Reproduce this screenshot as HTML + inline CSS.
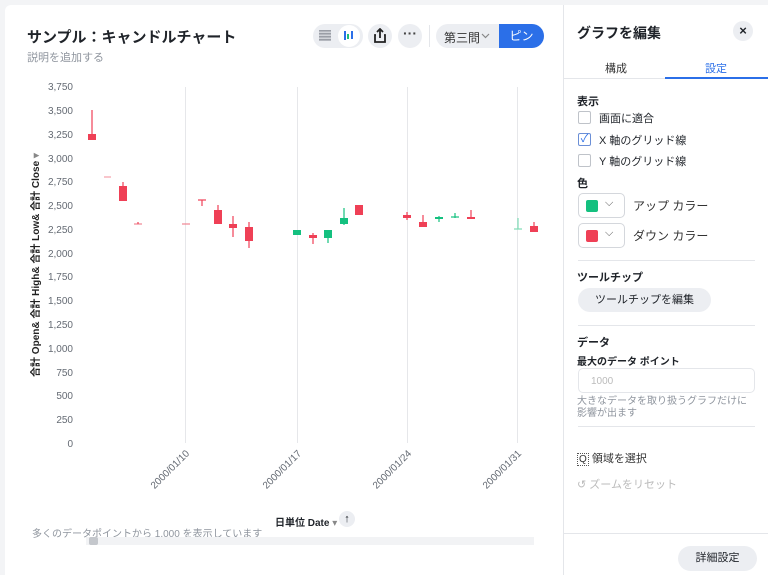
<!DOCTYPE html>
<html><head><meta charset="utf-8"><style>
*{margin:0;padding:0;box-sizing:border-box}
body{width:768px;height:575px;overflow:hidden;background:#f3f4f6;font-family:"Liberation Sans","Noto Sans CJK JP",sans-serif;color:#1f2329;position:relative}
.card{position:absolute;left:5px;top:5px;width:763px;height:570px;background:#fff;border-radius:6px 0 0 0}
.abs{position:absolute}
.title{left:27px;top:26px;font-size:15px;font-weight:bold}
.sub{left:27px;top:49px;font-size:11px;color:#8f959e}
.btn{background:#eceef2;border-radius:14px}
.panel{position:absolute;left:563px;top:5px;width:205px;height:570px;border-left:1px solid #e4e6ea;background:#fff}
.p{position:absolute;font-size:11px}
.cb{position:absolute;width:13px;height:13px;border:1px solid #bfc3c9;border-radius:2px;left:14px}
.sw{position:absolute;left:14px;width:47px;height:25px;border:1px solid #d4d7dc;border-radius:5px}
.sw i{position:absolute;left:7px;top:6px;width:12px;height:12px;border-radius:2px}
.sw b{position:absolute;left:26px;top:3px;font-size:11px;color:#555;font-weight:normal}
.hr{position:absolute;left:14px;width:177px;height:1px;background:#e4e6ea}
</style></head><body>
<div class="card"></div>
<div class="abs title">サンプル：キャンドルチャート</div>
<div class="abs sub">説明を追加する</div>
<div class="abs btn" style="left:313px;top:24px;width:50px;height:24px"></div>
<div class="abs" style="left:319px;top:30px;width:12px;height:11px;background:repeating-linear-gradient(#9a9ea6 0 1.5px,#d0d3d8 1.5px 3px)"></div>
<div class="abs" style="left:338px;top:25px;width:22px;height:22px;background:#fff;border-radius:50%"></div>
<div class="abs" style="left:344px;top:31px;width:2px;height:9px;background:#2b6fe8"></div>
<div class="abs" style="left:347px;top:34px;width:2px;height:5px;background:#1fbf7a"></div>
<div class="abs" style="left:351px;top:31px;width:2px;height:8px;background:#2b6fe8"></div>
<div class="abs btn" style="left:368px;top:24px;width:24px;height:24px;border-radius:50%"></div>
<svg class="abs" style="left:373px;top:28px" width="14" height="16" viewBox="0 0 14 16"><path d="M7 1v9M4 4l3-3 3 3M3 7H2v7h10V7h-1" fill="none" stroke="#222" stroke-width="1.8"/></svg>
<div class="abs btn" style="left:398px;top:24px;width:24px;height:24px;border-radius:50%;text-align:center;font-size:14px;line-height:18px;font-weight:bold;color:#444">···</div>
<div class="abs" style="left:429px;top:25px;width:1px;height:22px;background:#e4e6ea"></div>
<div class="abs" style="left:436px;top:24px;width:108px;height:24px;background:#eceef2;border-radius:12px"></div>
<div class="abs" style="left:444px;top:29px;font-size:12px;color:#333">第三問</div>
<svg class="abs" style="left:481px;top:33px" width="9" height="6"><path d="M1 1l3.5 3.5L8 1" fill="none" stroke="#888" stroke-width="1.2"/></svg>
<div class="abs" style="left:499px;top:24px;width:45px;height:24px;background:#2b6fe8;border-radius:0 12px 12px 0;color:#fff;font-size:12px;text-align:center;line-height:24px">ピン</div>
<svg class="abs" style="left:0;top:0" width="563" height="575">
<g stroke="#e6e7ea" stroke-width="1"><line x1="185.5" y1="87" x2="185.5" y2="443"/><line x1="297.5" y1="87" x2="297.5" y2="443"/><line x1="407.5" y1="87" x2="407.5" y2="443"/><line x1="517.5" y1="87" x2="517.5" y2="443"/></g>
<g font-size="10" fill="#646a73" text-anchor="end" font-family="Liberation Sans,sans-serif">
<text x="73" y="90">3,750</text><text x="73" y="114">3,500</text><text x="73" y="138">3,250</text><text x="73" y="162">3,000</text><text x="73" y="185">2,750</text><text x="73" y="209">2,500</text><text x="73" y="233">2,250</text><text x="73" y="257">2,000</text><text x="73" y="280">1,750</text><text x="73" y="304">1,500</text><text x="73" y="328">1,250</text><text x="73" y="352">1,000</text><text x="73" y="376">750</text><text x="73" y="399">500</text><text x="73" y="423">250</text><text x="73" y="447">0</text>
</g>
<text transform="translate(39,265) rotate(-90)" text-anchor="middle" font-size="10" font-weight="bold" fill="#222" font-family="Liberation Sans,Noto Sans CJK JP,sans-serif">合計 Open&amp; 合計 High&amp; 合計 Low&amp; 合計 Close <tspan fill="#888">▾</tspan></text>
<g font-size="10" fill="#646a73" text-anchor="end" font-family="Liberation Sans,sans-serif">
<text transform="translate(190,454) rotate(-45)">2000/01/10</text>
<text transform="translate(302,454) rotate(-45)">2000/01/17</text>
<text transform="translate(412,454) rotate(-45)">2000/01/24</text>
<text transform="translate(522,454) rotate(-45)">2000/01/31</text>
</g>
<g fill="#ef4056" stroke="#ef4056" stroke-width="1.2">
<line x1="92" y1="110" x2="92" y2="140"/><rect x="88" y="134" width="8" height="6" stroke="none"/>
<line x1="104" y1="177" x2="111" y2="177" stroke="#f5a0ab"/>
<line x1="123" y1="182" x2="123" y2="201"/><rect x="119" y="186" width="8" height="15" stroke="none"/>
<line x1="134" y1="224" x2="142" y2="224" stroke="#f08592"/><line x1="138" y1="222" x2="138" y2="224"/>
<line x1="182" y1="224" x2="190" y2="224" stroke="#f08592"/>
<line x1="198" y1="200" x2="206" y2="200"/><line x1="202" y1="200" x2="202" y2="206"/>
<line x1="218" y1="205" x2="218" y2="224"/><rect x="214" y="210" width="8" height="14" stroke="none"/>
<line x1="233" y1="216" x2="233" y2="237"/><rect x="229" y="224" width="8" height="4" stroke="none"/>
<line x1="249" y1="222" x2="249" y2="248"/><rect x="245" y="227" width="8" height="14" stroke="none"/>
<line x1="313" y1="233" x2="313" y2="244"/><rect x="309" y="235" width="8" height="3" stroke="none"/>
<rect x="355" y="205" width="8" height="10" stroke="none"/>
<line x1="407" y1="212" x2="407" y2="220"/><rect x="403" y="215" width="8" height="3" stroke="none"/>
<line x1="423" y1="215" x2="423" y2="227"/><rect x="419" y="222" width="8" height="5" stroke="none"/>
<line x1="471" y1="210" x2="471" y2="219"/><rect x="467" y="217" width="8" height="2" stroke="none"/>
<line x1="534" y1="222" x2="534" y2="232"/><rect x="530" y="226" width="8" height="6" stroke="none"/>
</g>
<g fill="#14c07f" stroke="#14c07f" stroke-width="1.2">
<rect x="293" y="230" width="8" height="5" stroke="none"/>
<line x1="328" y1="230" x2="328" y2="243"/><rect x="324" y="230" width="8" height="8" stroke="none"/>
<line x1="344" y1="208" x2="344" y2="225"/><rect x="340" y="218" width="8" height="6" stroke="none"/>
<line x1="439" y1="216" x2="439" y2="222"/><rect x="435" y="217" width="8" height="2" stroke="none"/>
<line x1="455" y1="213" x2="455" y2="218"/><line x1="451" y1="217" x2="459" y2="217"/>
<line x1="518" y1="218" x2="518" y2="229" stroke="#7fdcb6"/><line x1="514" y1="229" x2="522" y2="229" stroke="#7fdcb6"/>
</g>
</svg>
<div class="abs" style="left:275px;top:514px;font-size:10px;font-weight:bold">日単位 Date <span style="color:#888;font-weight:normal">▾</span></div>
<div class="abs" style="left:339px;top:511px;width:16px;height:16px;border-radius:50%;background:#eceef2;text-align:center;font-size:11px;line-height:16px;font-weight:bold">↑</div>
<div class="abs" style="left:32px;top:525px;font-size:10px;color:#8f959e">多くのデータポイントから 1,000 を表示しています</div>
<div class="abs" style="left:86px;top:537px;width:448px;height:8px;background:#f2f3f5"></div>
<div class="abs" style="left:89px;top:537px;width:9px;height:8px;background:#c4c7cc;border-radius:2px"></div>
<div class="panel">
<div class="p" style="left:13px;top:18px;font-size:14px;font-weight:bold">グラフを編集</div>
<div class="abs" style="left:169px;top:16px;width:20px;height:20px;border-radius:50%;background:#eceef2;text-align:center;line-height:20px;font-size:13px;font-weight:bold">×</div>
<div class="p" style="left:41px;top:55px;color:#333">構成</div>
<div class="p" style="left:141px;top:55px;color:#2b6fe8">設定</div>
<div class="abs" style="left:0;top:73px;width:205px;height:1px;background:#e4e6ea"></div>
<div class="abs" style="left:101px;top:72px;width:104px;height:2px;background:#2b6fe8"></div>
<div class="p" style="left:13px;top:88px;font-weight:bold">表示</div>
<div class="cb" style="top:106px"></div><div class="p" style="left:35px;top:105px">画面に適合</div>
<div class="cb" style="top:128px;border-color:#6b8fd6;color:#2b6fe8;font-size:11px;line-height:11px;text-align:center">✓</div><div class="p" style="left:35px;top:127px">X 軸のグリッド線</div>
<div class="cb" style="top:149px"></div><div class="p" style="left:35px;top:148px">Y 軸のグリッド線</div>
<div class="p" style="left:13px;top:170px;font-weight:bold">色</div>
<div class="sw" style="top:188px"><i style="background:#14c07f"></i><b>⌵</b></div><div class="p" style="left:69px;top:192px;font-size:12px;color:#333">アップ カラー</div>
<div class="sw" style="top:218px"><i style="background:#ef4056"></i><b>⌵</b></div><div class="p" style="left:69px;top:222px;font-size:12px;color:#333">ダウン カラー</div>
<div class="hr" style="top:255px"></div>
<div class="p" style="left:13px;top:264px;font-weight:bold">ツールチップ</div>
<div class="abs" style="left:14px;top:283px;width:133px;height:24px;border-radius:12px;background:#eceef2;font-size:11px;text-align:center;line-height:24px">ツールチップを編集</div>
<div class="hr" style="top:320px"></div>
<div class="p" style="left:13px;top:329px;font-weight:bold">データ</div>
<div class="p" style="left:13px;top:348px;font-size:10px;font-weight:bold">最大のデータ ポイント</div>
<div class="abs" style="left:14px;top:363px;width:177px;height:25px;border:1px solid #e4e6ea;border-radius:5px;font-size:10px;color:#bbb;padding:7px 12px">1000</div>
<div class="p" style="left:13px;top:391px;font-size:10px;color:#8f959e;line-height:12px;width:177px">大きなデータを取り扱うグラフだけに影響が出ます</div>
<div class="hr" style="top:421px"></div>
<div class="p" style="left:13px;top:445px;color:#333"><span style="font-size:10px;border:1px dotted #555;padding:0 1px">Q</span> 領域を選択</div>
<div class="p" style="left:13px;top:471px;color:#bbb">↺ ズームをリセット</div>
<div class="abs" style="left:0;top:528px;width:205px;height:1px;background:#e4e6ea"></div>
<div class="abs" style="left:114px;top:541px;width:79px;height:25px;border-radius:13px;background:#eceef2;font-size:11px;text-align:center;line-height:25px">詳細設定</div>
</div>
</body></html>
